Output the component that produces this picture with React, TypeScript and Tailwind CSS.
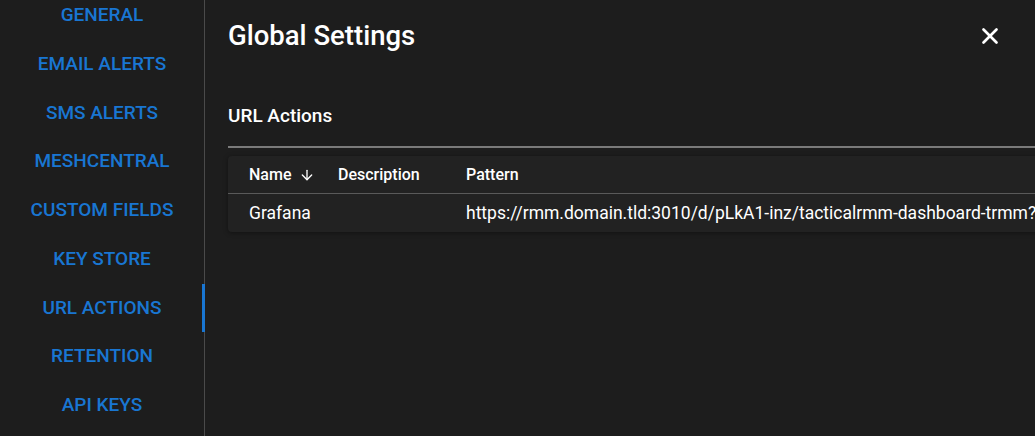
import { X, ArrowDown } from 'lucide-react';

const tabs = [
  'GENERAL',
  'EMAIL ALERTS',
  'SMS ALERTS',
  'MESHCENTRAL',
  'CUSTOM FIELDS',
  'KEY STORE',
  'URL ACTIONS',
  'RETENTION',
  'API KEYS',
];

export default function App() {
  return (
    <div
      className="flex h-[436px] w-[1035px] overflow-hidden bg-[#1d1d1d] text-white"
      style={{ fontFamily: 'Roboto, "Liberation Sans", sans-serif' }}
    >
      <div className="flex w-[205px] shrink-0 flex-col border-r border-[#4a4a4a]">
        <div className="-mt-[9px] flex flex-col">
          {tabs.map((t) => (
            <div
              key={t}
              className={`relative flex h-[48.75px] items-center justify-center text-[19px] font-medium text-[#1976d2] ${
                t === 'URL ACTIONS' ? 'after:absolute after:right-[-1px] after:top-0 after:h-full after:w-[3px] after:bg-[#1976d2]' : ''
              }`}
            >
              {t}
            </div>
          ))}
        </div>
      </div>

      <div className="flex min-w-0 flex-1 flex-col overflow-hidden pl-[23px]">
        <div className="flex h-[72px] items-center justify-between pr-[32px]">
          <h1 className="text-[27.5px] font-medium">Global Settings</h1>
          <X className="h-[26px] w-[26px]" strokeWidth={2.5} />
        </div>

        <div className="mt-[32px] h-[24px] text-[19px] font-medium leading-[24px]">URL Actions</div>
        <div className="mt-[18px] h-[2px] w-[900px] bg-[#7a7a7a]" />

        <div className="mt-[8px] w-[900px] rounded-[4px] bg-[#222222] shadow-[0_1px_5px_rgba(0,0,0,0.4)]">
          <div className="flex h-[38px] items-center border-b border-[#5a5a5a] text-[16px] font-medium">
            <div className="flex w-[110px] items-center pl-[21px]">
              Name
              <ArrowDown className="ml-[8px] h-[16px] w-[16px]" strokeWidth={2} />
            </div>
            <div className="w-[128px]">Description</div>
            <div>Pattern</div>
          </div>
          <div className="flex h-[38px] items-center text-[17.5px]">
            <div className="w-[110px] pl-[21px]">Grafana</div>
            <div className="w-[128px]" />
            <div className="whitespace-nowrap">
              https://rmm.domain.tld:3010/d/pLkA1-inz/tacticalrmm-dashboard-trmm?
            </div>
          </div>
        </div>
      </div>
    </div>
  );
}
